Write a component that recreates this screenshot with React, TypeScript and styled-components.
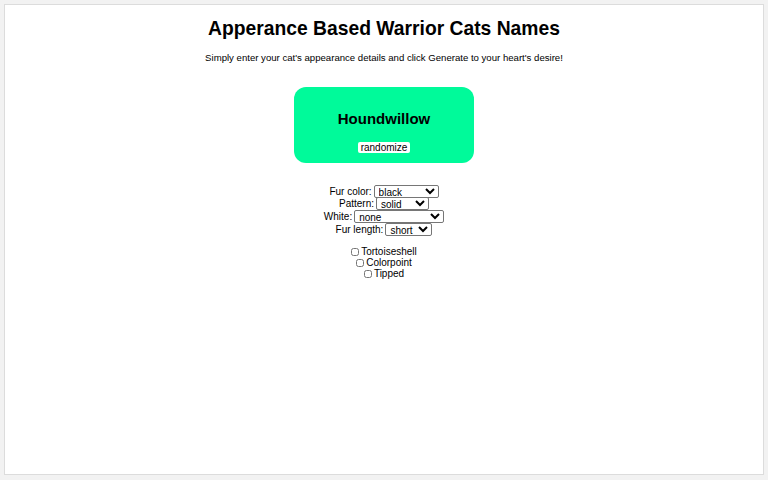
import styled, { createGlobalStyle } from "styled-components";

const Global = createGlobalStyle`
    html, body {
        margin: 0;
        background: #f2f2f2;
    }
    body {
        padding: 4px;
        font-family: "Liberation Sans", Arial, sans-serif;
    }
`;

const Page = styled.main`
    height: 471px;
    box-sizing: border-box;
    background: #fff;
    border: 1px solid #dcdcdc;
    display: flex;
    flex-direction: column;
    align-items: center;
    text-align: center;
`;

const Title = styled.h1`
    margin: 12px 0 0;
    font-size: 19.3px;
    line-height: 24px;
    font-weight: 700;
    color: #000;
`;

const Intro = styled.p`
    margin: 11px 0 0;
    font-size: 9.6px;
    line-height: 12px;
`;

const NameCard = styled.section`
    margin-top: 23px;
    width: 180px;
    height: 76px;
    box-sizing: border-box;
    border-radius: 12px;
    background: #00fa9a;
    display: flex;
    flex-direction: column;
    align-items: center;
    padding-top: 23px;
`;

const Name = styled.h2`
    margin: 0;
    font-size: 15px;
    line-height: 18px;
    font-weight: 700;
`;

const SmallButton = styled.button`
    margin-top: 14px;
    font-family: inherit;
    font-size: 10px;
    line-height: 11px;
    padding: 0 3px;
    border: none;
    border-radius: 2px;
    background: #fff;
    color: #000;
`;

const Options = styled.form`
    margin-top: 22px;
    display: flex;
    flex-direction: column;
    align-items: center;
    font-size: 10px;
`;

const Field = styled.label`
    display: flex;
    align-items: center;
    gap: 2px;
    height: 12.6px;
`;

const Select = styled.select<{ $w: number }>`
    width: ${(p) => p.$w}px;
    height: 13px;
    box-sizing: border-box;
    font-family: inherit;
    font-size: 10px;
    padding: 0;
    border: 1px solid #767676;
    border-radius: 2px;
    background: #fff;
    color: #000;
`;

const Checks = styled.div`
    margin-top: 11px;
    display: flex;
    flex-direction: column;
    align-items: center;
`;

const Check = styled.label`
    display: flex;
    align-items: center;
    gap: 2px;
    height: 11px;
`;

const Box = styled.input`
    margin: 0;
    width: 8px;
    height: 8px;
`;

const fields = [
    { label: "Fur color:", w: 65, opts: ["black", "white", "gray", "ginger", "brown", "cream"] },
    { label: "Pattern:", w: 53, opts: ["solid", "tabby", "spotted", "ticked"] },
    { label: "White:", w: 90, opts: ["none", "small", "bicolor", "van"] },
    { label: "Fur length:", w: 47, opts: ["short", "medium", "long"] },
];

export default function App() {
    return (
        <>
            <Global />
            <Page>
                <Title>Apperance Based Warrior Cats Names</Title>
                <Intro>Simply enter your cat's appearance details and click Generate to your heart's desire!</Intro>
                <NameCard>
                    <Name>Houndwillow</Name>
                    <SmallButton type="button">randomize</SmallButton>
                </NameCard>
                <Options>
                    {fields.map((f) => (
                        <Field key={f.label}>
                            {f.label}
                            <Select $w={f.w}>
                                {f.opts.map((o) => (
                                    <option key={o}>{o}</option>
                                ))}
                            </Select>
                        </Field>
                    ))}
                    <Checks>
                        <Check><Box type="checkbox" />Tortoiseshell</Check>
                        <Check><Box type="checkbox" />Colorpoint</Check>
                        <Check><Box type="checkbox" />Tipped</Check>
                    </Checks>
                </Options>
            </Page>
        </>
    );
}
